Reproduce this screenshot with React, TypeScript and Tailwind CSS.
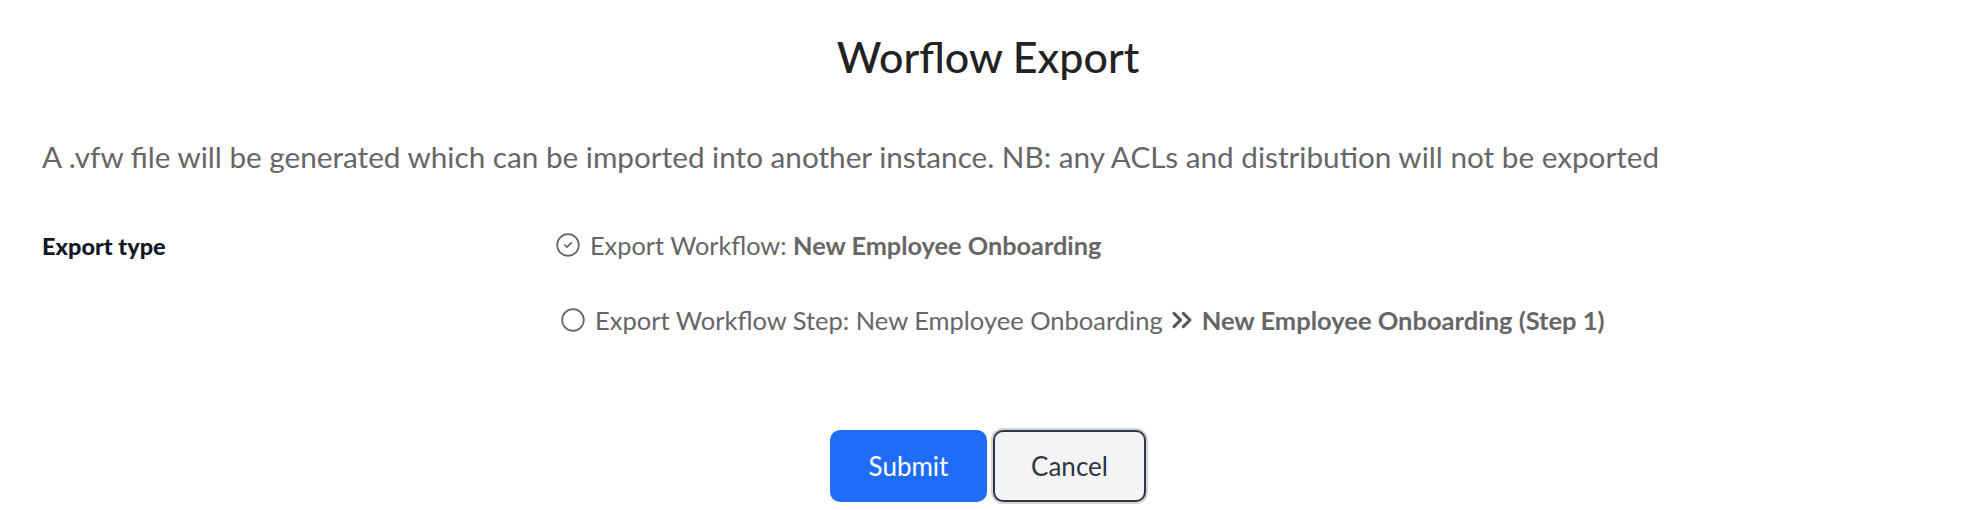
import { CircleCheck, Circle, ChevronsRight } from "lucide-react";

export default function App() {
  return (
    <div className="flex h-[510px] w-full flex-col bg-white font-['Lato','Noto_Sans',sans-serif]">
      <h1 className="mt-[33px] text-center text-[43px] leading-[48px] font-medium text-[#222222]">
        Worflow Export
      </h1>

      <p className="mt-[58px] px-[42px] text-[29.7px] leading-[36px] text-[#666666]">
        A .vfw file will be generated which can be imported into another instance. NB: any ACLs and
        distribution will not be exported
      </p>

      <div className="mt-[54px] flex px-[42px]">
        <div className="w-[513px] shrink-0 pt-[2px] text-[23.5px] leading-[30px] font-black text-[#111827]">
          Export type
        </div>

        <div className="flex flex-col gap-[43px]">
          <label className="flex items-center gap-[9px] text-[25.3px] leading-[32px] text-[#666666]">
            <CircleCheck className="h-[26px] w-[26px] shrink-0 text-[#666666]" strokeWidth={1.6} />
            <span>
              Export Workflow: <span className="font-bold">New Employee Onboarding</span>
            </span>
          </label>

          <label className="ml-[5px] flex items-center gap-[9px] text-[25.5px] leading-[32px] text-[#666666]">
            <Circle className="h-[26px] w-[26px] shrink-0 text-[#666666]" strokeWidth={1.6} />
            <span className="flex items-center">
              Export Workflow Step: New Employee Onboarding
              <ChevronsRight className="mr-[4px] ml-[3px] h-[32px] w-[32px] text-[#555555]" strokeWidth={2.25} />
              <span className="font-bold">New Employee Onboarding (Step 1)</span>
            </span>
          </label>
        </div>
      </div>

      <div className="mt-auto mb-[8px] flex justify-center gap-[6px]">
        <button className="h-[72px] w-[157px] rounded-[10px] bg-[#1f6df6] text-[26px] text-white">
          Submit
        </button>
        <button className="h-[72px] w-[153px] rounded-[10px] border-2 border-[#2d3748] bg-[#f4f4f4] text-[26px] text-[#2d3748] shadow-[0_0_0_2px_#d4d4d4]">
          Cancel
        </button>
      </div>
    </div>
  );
}
